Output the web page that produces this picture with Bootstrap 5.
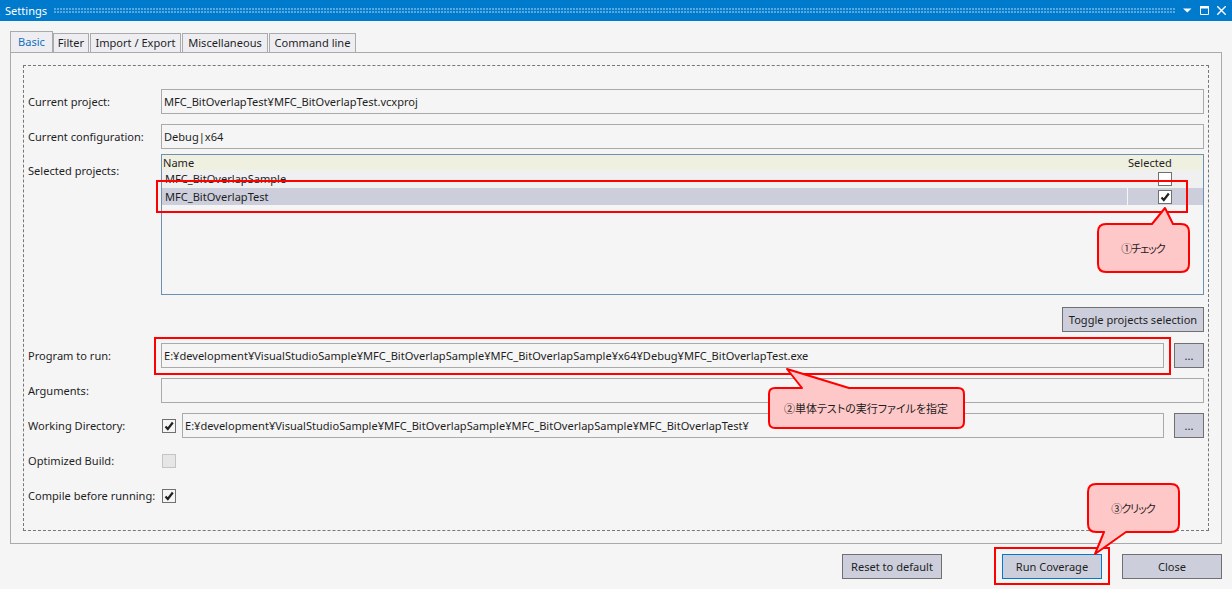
<!DOCTYPE html>
<html lang="en">
<head>
<meta charset="utf-8">
<title>Settings</title>
<link href="https://cdn.jsdelivr.net/npm/bootstrap@5.3.0/dist/css/bootstrap.min.css" rel="stylesheet">
<style>
html,body{height:589px;overflow:hidden}
body{background:#f5f5f5;color:#1e1e1e;font:11.07px/16px "Noto Sans","Noto Sans CJK JP",sans-serif;position:relative}
.titlebar{height:21px;background:#007acc;color:#fff;padding:0 6px 0 5px;font-size:11.07px}
.gripper{height:5px;margin:0 7px 0 7px;background-image:radial-gradient(circle at 1px 1px,#59a8de 0.8px,transparent 1px);background-size:3px 3px}
.winbtns svg{display:block}
.set-tabs{margin:10px 10px 0 10px;border-bottom:0;height:21px;flex-wrap:nowrap;align-items:flex-end;position:relative;z-index:1}
.set-tabs .nav-link{height:19px;padding:0;margin:0 1px 0 0;border:1px solid #aaa;border-bottom:0;border-radius:0;background:#eeeef2;color:#1e1e1e;font-size:11.07px;line-height:17px;text-align:center;box-sizing:border-box}
.set-tabs .nav-link.active{height:21px;line-height:19px;color:#0e70c0;background:#eeeef2;border-color:#aaa;margin-right:0}
.tab-a{width:43px}.tab-b{width:36px}.tab-c{width:91px}.tab-d{width:86px}.tab-e{width:87px}
.panel-box{margin:0 10px;width:1212px;height:492px;border:1px solid #aaa;padding:12px}
.dash-box{height:466px;width:1186px;border:1px dashed #777;padding:23px 4px 0 4px}
.lab{width:133px;flex:none}
.fieldrow{height:25px;margin-bottom:10px}
.fld{flex:1 1 0;height:25px;min-width:0;border:1px solid #aaa;border-radius:0;background:#f5f5f5;color:#1e1e1e;line-height:23px;padding:0 2px;white-space:nowrap;overflow:hidden}
.flatbtn{height:25px;border:1px solid #707070;border-radius:0;background:#cccedb;color:#1e1e1e;font-size:11.07px;line-height:23px;padding:0}
.flatbtn:hover{background:#cccedb;color:#1e1e1e;border-color:#707070}
.btn-more{width:30px;margin-left:10px;flex:none}
.btn-toggle{width:142px}
.btn-foot{width:100px}
.btn-run{border-color:#007acc;margin:0 20px 0 60px}
.listrow{margin-bottom:13px;height:140px;margin-top:-5px}
.lab-list{padding-top:9px}
.listbox{flex:1 1 0;height:141px;border:1px solid #6d8fb0;background:#f5f5f5;overflow:hidden}
.listtable{--bs-table-bg:transparent;--bs-table-color:#1e1e1e;--bs-table-border-color:transparent;margin:0;table-layout:fixed;width:100%}
.listtable th,.listtable td{padding:0;border:0;font-weight:400;font-size:11.07px;line-height:14px;vertical-align:middle}
.listtable thead th{background:#f0f0e0;height:15px;padding-left:1px;padding-top:1px}
.listtable .col-sel{width:76px;text-align:center;padding:0}
.listtable thead .col-sel{text-align:left;padding-left:1px}
.listtable td{height:18px;padding-left:3px}
.listtable tr.rowa td{background:#f0f0f0}
.listtable tr.rowb td{background:#cccedb;height:17px}
.listtable tr.rowb td.col-sel{border-left:1px solid #f5f5f5}
.chk{width:14px;height:14px;border:1px solid #707070;background:#fff;display:flex;flex:none;align-items:center;justify-content:center}
.listtable .chk{margin:0 auto}
.chk.plainbg{background:#f5f5f5}
.chk.off{background:#e6e6e6;border-color:#c4c4c4}
.chk-lead{margin-left:1px;margin-right:6px}
.row-after-toggle{margin-top:11px}
.footrow{margin-top:10px;width:1222px}
.redbox{position:absolute;border:2px solid #f00;pointer-events:none}
.rb1{left:156px;top:180px;width:1032px;height:33px}
.rb2{left:154px;top:337px;width:1017px;height:38px}
.rb3{left:994px;top:547px;width:116px;height:38px}
.callout{position:absolute;left:0;top:0;pointer-events:none}
.calltext{position:absolute;font:11px/14px "Noto Sans CJK JP",sans-serif;font-feature-settings:"palt";color:#1e1e1e;white-space:nowrap;transform:translateX(-50%)}
.ct1{left:1143px;top:241px;letter-spacing:-1px}
.ct2{left:866px;top:401px}
.ct3{left:1133px;top:501px;letter-spacing:-1px}
</style>
</head>
<body>
<div class="titlebar d-flex align-items-center">
  <span>Settings</span>
  <div class="gripper flex-grow-1"></div>
  <div class="winbtns d-flex align-items-center gap-2">
    <svg width="9" height="9" viewBox="0 0 9 9"><path d="M0 2.500h8.500L4.250 6.500z" fill="#fff"/></svg>
    <svg width="9" height="9" viewBox="0 0 9 9"><path d="M.5 .5h8v8h-8z" fill="none" stroke="#fff" stroke-width="1"/><rect x="0" y="0" width="9" height="2.500" fill="#fff"/></svg>
    <svg width="9" height="9" viewBox="0 0 9 9"><path d="M.3 .3L8.700 8.700M8.700 .3L.3 8.700" fill="none" stroke="#fff" stroke-width="1.400"/></svg>
  </div>
</div>

<ul class="nav nav-tabs set-tabs">
  <li class="nav-item"><a class="nav-link active tab-a" href="#">Basic</a></li>
  <li class="nav-item"><a class="nav-link tab-b" href="#">Filter</a></li>
  <li class="nav-item"><a class="nav-link tab-c" href="#">Import / Export</a></li>
  <li class="nav-item"><a class="nav-link tab-d" href="#">Miscellaneous</a></li>
  <li class="nav-item"><a class="nav-link tab-e" href="#">Command line</a></li>
</ul>

<div class="panel-box">
  <div class="dash-box">
    <div class="d-flex align-items-center fieldrow"><div class="lab">Current project:</div><div class="fld">MFC_BitOverlapTest¥MFC_BitOverlapTest.vcxproj</div></div>
    <div class="d-flex align-items-center fieldrow"><div class="lab">Current configuration:</div><div class="fld">Debug|x64</div></div>
    <div class="d-flex listrow">
      <div class="lab lab-list">Selected projects:</div>
      <div class="listbox">
        <table class="table listtable">
          <thead><tr><th>Name</th><th class="col-sel">Selected</th></tr></thead>
          <tbody>
            <tr class="rowa"><td>MFC_BitOverlapSample</td><td class="col-sel"><span class="chk"></span></td></tr>
            <tr class="rowb"><td>MFC_BitOverlapTest</td><td class="col-sel"><span class="chk"><svg width="12" height="12" viewBox="0 0 12 12"><path d="M2.500 6.500L4.800 9L9.800 2.500" fill="none" stroke="#222" stroke-width="2.200"/></svg></span></td></tr>
          </tbody>
        </table>
      </div>
    </div>
    <div class="d-flex justify-content-end fieldrow mb-0"><button class="btn flatbtn btn-toggle" type="button">Toggle projects selection</button></div>
    <div class="d-flex align-items-center fieldrow row-after-toggle"><div class="lab">Program to run:</div><div class="fld">E:¥development¥VisualStudioSample¥MFC_BitOverlapSample¥MFC_BitOverlapSample¥x64¥Debug¥MFC_BitOverlapTest.exe</div><button class="btn flatbtn btn-more" type="button">...</button></div>
    <div class="d-flex align-items-center fieldrow"><div class="lab">Arguments:</div><div class="fld"></div></div>
    <div class="d-flex align-items-center fieldrow"><div class="lab">Working Directory:</div><span class="chk plainbg chk-lead"><svg width="12" height="12" viewBox="0 0 12 12"><path d="M2.500 6.500L4.800 9L9.800 2.500" fill="none" stroke="#222" stroke-width="2.200"/></svg></span><div class="fld">E:¥development¥VisualStudioSample¥MFC_BitOverlapSample¥MFC_BitOverlapSample¥MFC_BitOverlapTest¥</div><button class="btn flatbtn btn-more" type="button">...</button></div>
    <div class="d-flex align-items-center fieldrow"><div class="lab">Optimized Build:</div><span class="chk off chk-lead"></span></div>
    <div class="d-flex align-items-center fieldrow"><div class="lab">Compile before running:</div><span class="chk plainbg chk-lead"><svg width="12" height="12" viewBox="0 0 12 12"><path d="M2.500 6.500L4.800 9L9.800 2.500" fill="none" stroke="#222" stroke-width="2.200"/></svg></span></div>
  </div>
</div>

<div class="d-flex justify-content-end footrow">
  <button class="btn flatbtn btn-foot" type="button">Reset to default</button>
  <button class="btn flatbtn btn-foot btn-run" type="button">Run Coverage</button>
  <button class="btn flatbtn btn-foot" type="button">Close</button>
</div>

<div class="redbox rb1"></div>
<div class="redbox rb2"></div>
<div class="redbox rb3"></div>
<svg class="callout" width="1232" height="589" viewBox="0 0 1232 589" fill="#ffc8c8" stroke="#f00" stroke-width="2" stroke-linejoin="round">
  <path d="M1106 224H1152L1165 208L1173 224H1181Q1189 224 1189 232V264Q1189 272 1181 272H1106Q1098 272 1098 264V232Q1098 224 1106 224Z"/>
  <path d="M775 388H802L787 369L849 388H958Q964 388 964 394V422Q964 428 958 428H775Q769 428 769 422V394Q769 388 775 388Z"/>
  <path d="M1096 484H1171Q1179 484 1179 492V524Q1179 532 1171 532H1126L1095 554L1104 532H1096Q1088 532 1088 524V492Q1088 484 1096 484Z"/>
</svg>
<div class="calltext ct1">①チェック</div>
<div class="calltext ct2">②単体テストの実行ファイルを指定</div>
<div class="calltext ct3">③クリック</div>
<script src="https://cdn.jsdelivr.net/npm/bootstrap@5.3.0/dist/js/bootstrap.bundle.min.js"></script>
</body>
</html>
